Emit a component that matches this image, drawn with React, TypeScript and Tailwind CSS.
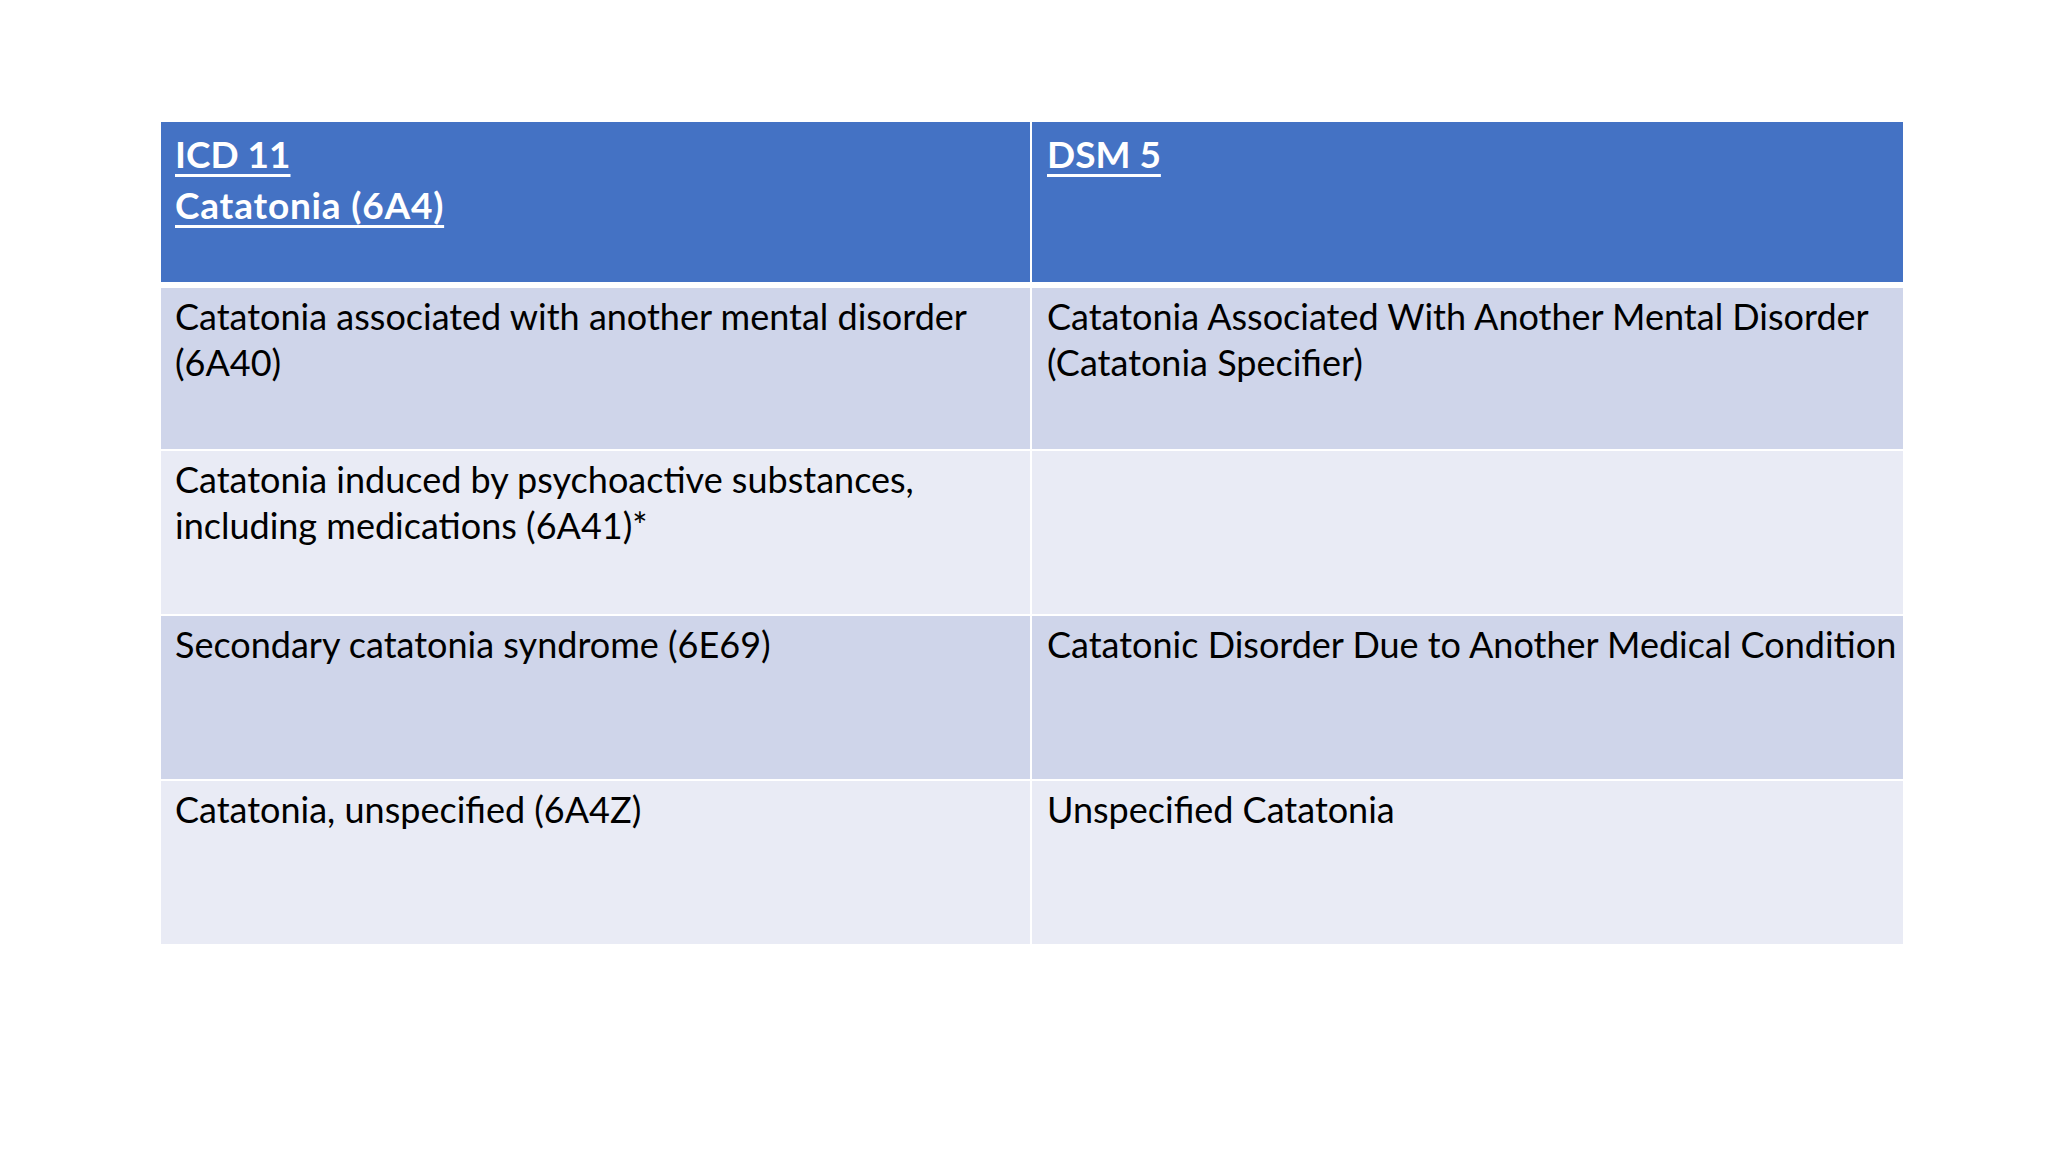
import React from 'react';

const rows = [
  {
    icd: 'Catatonia associated with another mental disorder (6A40)',
    dsm: 'Catatonia Associated With Another Mental Disorder (Catatonia Specifier)',
  },
  {
    icd: 'Catatonia induced by psychoactive substances, including medications (6A41)*',
    dsm: '',
  },
  {
    icd: 'Secondary catatonia syndrome (6E69)',
    dsm: 'Catatonic Disorder Due to Another Medical Condition',
  },
  {
    icd: 'Catatonia, unspecified (6A4Z)',
    dsm: 'Unspecified Catatonia',
  },
];

const App = () => {
  return (
    <div className="w-[2048px] h-[1152px] bg-white overflow-hidden" style={{ fontFamily: 'Lato, "Open Sans", sans-serif' }}>
      <div className="pt-[122px] pl-[161px]">
        <div className="w-[1742px] flex flex-col">
          {/* Header */}
          <div className="grid grid-cols-[869px_871px] gap-x-[2px] bg-white border-b-[6px] border-white">
            <div className="h-[160px] bg-[#4472c4] pl-[14px] pt-[6px] text-white font-bold text-[37px] leading-[51px]">
              <div className="underline decoration-[3px] underline-offset-[6px]">ICD 11</div>
              <div className="underline decoration-[3px] underline-offset-[6px] tracking-[0.8px]">Catatonia (6A4)</div>
            </div>
            <div className="h-[160px] bg-[#4472c4] pl-[15px] pt-[6px] text-white font-bold text-[37px] leading-[51px]">
              <div className="underline decoration-[3px] underline-offset-[6px]">DSM 5</div>
            </div>
          </div>

          {/* Body rows */}
          <div className="flex flex-col gap-y-[2px] bg-white">
            {rows.map((row, i) => (
              <div
                key={i}
                className={`grid grid-cols-[869px_871px] gap-x-[2px] ${i === 0 ? 'h-[161px]' : 'h-[163px]'}`}
              >
                <div className={`${i % 2 === 0 ? 'bg-[#cfd5ea]' : 'bg-[#e9ebf5]'} pl-[14px] pr-[4px] pt-[5px] text-black text-[36px] leading-[46px]`}>
                  {row.icd}
                </div>
                <div className={`${i % 2 === 0 ? 'bg-[#cfd5ea]' : 'bg-[#e9ebf5]'} pl-[15px] pr-[2px] pt-[5px] text-black text-[36px] leading-[46px]`}>
                  {row.dsm}
                </div>
              </div>
            ))}
          </div>
        </div>
      </div>
    </div>
  );
};

export default App;
